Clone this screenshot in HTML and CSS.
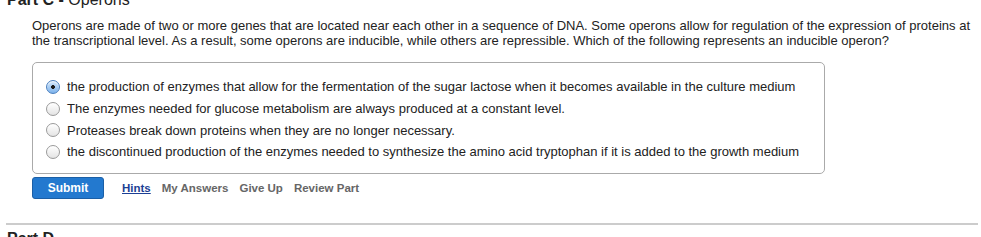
FILE: index.html
```html
<!DOCTYPE html>
<html>
<head>
<meta charset="utf-8">
<link rel="stylesheet" href="styles.css">
</head>
<body>
<div class="page">
  <h2 class="part-title"><b>Part C - </b>Operons</h2>
  <div class="part-body">
    <p class="question">Operons are made of two or more genes that are located near each other in a sequence of DNA. Some operons allow for regulation of the expression of proteins at the transcriptional level. As a result, some operons are inducible, while others are repressible. Which of the following represents an inducible operon?</p>
    <div class="choices">
      <label class="choice"><span class="radio checked"></span><span class="choice-text">the production of enzymes that allow for the fermentation of the sugar lactose when it becomes available in the culture medium</span></label>
      <label class="choice"><span class="radio"></span><span class="choice-text">The enzymes needed for glucose metabolism are always produced at a constant level.</span></label>
      <label class="choice"><span class="radio"></span><span class="choice-text">Proteases break down proteins when they are no longer necessary.</span></label>
      <label class="choice"><span class="radio"></span><span class="choice-text">the discontinued production of the enzymes needed to synthesize the amino acid tryptophan if it is added to the growth medium</span></label>
    </div>
    <div class="actions">
      <button class="submit">Submit</button>
      <a class="link hints">Hints</a>
      <a class="link">My Answers</a>
      <a class="link">Give Up</a>
      <a class="link">Review Part</a>
    </div>
  </div>
  <hr class="divider">
  <h2 class="part-title next"><b>Part D</b></h2>
</div>
</body>
</html>
```
FILE: styles.css
```css
html, body {
  margin: 0;
  padding: 0;
  background: #fff;
}
body {
  font-family: "Liberation Sans", Arial, sans-serif;
  color: #222;
  overflow: hidden;
}
.page {
  padding: 0 3px 0 7px;
}
.part-title {
  margin: -9px 0 0 0;
  font-size: 16px;
  line-height: 18px;
  font-weight: normal;
  color: #222;
}
.part-title b {
  font-weight: bold;
}
.part-title.next {
  margin-top: 5px;
}
.part-body {
  padding-left: 25px;
}
.question {
  margin: 9px 0 0 0;
  font-size: 13px;
  line-height: 15px;
  width: 945px;
  color: #222;
}
.choices {
  margin-top: 14px;
  width: 791px;
  border: 1px solid #aaa;
  border-radius: 5px;
  padding: 13px 0 10px 0;
}
.choice {
  display: flex;
  align-items: center;
  height: 21.7px;
  padding-left: 13px;
  font-size: 13px;
  color: #222;
}
.radio {
  width: 12px;
  height: 12px;
  border-radius: 50%;
  border: 1px solid #9a9a9a;
  background: linear-gradient(#ffffff, #e4e4e4);
  box-shadow: inset 0 1px 1px rgba(255,255,255,0.8);
  margin-right: 7px;
  flex: none;
}
.radio.checked {
  border-color: #4a7fbf;
  background: radial-gradient(circle at 50% 50%, #1a1a1a 0, #1a1a1a 1.6px, transparent 2.2px),
              linear-gradient(#d5e8fb, #7db3ec);
}
.actions {
  margin-top: 3px;
  display: flex;
  align-items: center;
}
.submit {
  width: 72px;
  height: 22px;
  background: #2379cf;
  border: 1px solid #1b5fa6;
  border-radius: 3px;
  color: #fff;
  font-family: "Liberation Sans", Arial, sans-serif;
  font-size: 12px;
  font-weight: bold;
  padding: 0;
  margin-right: 18px;
}
.link {
  font-size: 11.5px;
  font-weight: bold;
  color: #666;
  margin-right: 11px;
}
.link.hints {
  color: #1c3f94;
  text-decoration: underline;
}
.divider {
  margin: 24px 0 0 -1px;
  width: 972px;
  height: 2px;
  border: 0;
  background: #cccccc;
}
```
